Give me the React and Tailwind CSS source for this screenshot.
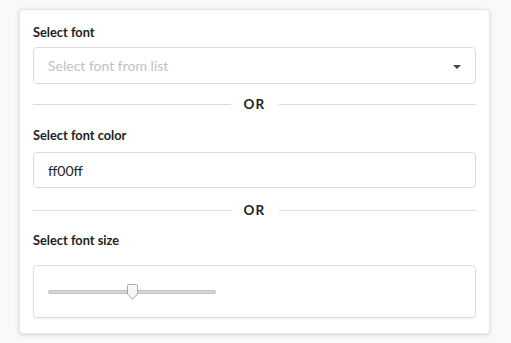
import { useState } from "react";

const Divider = () => (
  <div className="flex items-center h-4">
    <div className="flex-1 h-px bg-[#dcdcdc]" />
    <span className="px-[13px] text-[13.5px] font-bold tracking-[1.2px] text-[#222]">OR</span>
    <div className="flex-1 h-px bg-[#dcdcdc]" />
  </div>
);

const App = () => {
  const [color, setColor] = useState("ff00ff");
  const [size, setSize] = useState(50);

  return (
    <div className="min-h-[343px] bg-[#f9f9f9] pt-[9px] pl-[19px]" style={{ fontFamily: "Lato, 'Open Sans', sans-serif" }}>
      <div className="w-[471px] bg-white rounded-[4px] border border-[#e6e6e6] shadow-[0_1px_4px_rgba(0,0,0,0.15)] px-[13px] pt-[14px] pb-[15px]">
        <label className="block h-4 leading-4 text-[12.8px] font-bold text-[#222] mb-[7px]">Select font</label>
        <div className="relative h-[37px] border border-[#dcdcdc] rounded-[4px] flex items-center pl-[14px]">
          <span className="text-[14px] text-[#c2c2c2]">Select font from list</span>
          <span className="absolute right-[14px] top-[17px] w-0 h-0 border-l-[4px] border-r-[4px] border-t-[4px] border-l-transparent border-r-transparent border-t-[#444]" />
        </div>
        <div className="mt-[12px]">
          <Divider />
        </div>
        <label className="block mt-[15px] h-4 leading-4 text-[12.8px] font-bold text-[#222] mb-[9px]">Select font color</label>
        <input
          value={color}
          onChange={(e) => setColor(e.target.value)}
          className="block w-full h-[36px] border border-[#dcdcdc] rounded-[4px] pl-[14px] text-[14px] text-[#222] outline-none"
        />
        <div className="mt-[14px]">
          <Divider />
        </div>
        <label className="block mt-[14px] h-4 leading-4 text-[12.8px] font-bold text-[#222] mb-[17px]">Select font size</label>
        <div className="h-[53px] border border-[#dcdcdc] rounded-[4px] shadow-[0_1px_2px_rgba(0,0,0,0.06)] flex items-center pl-[14px]">
          <div className="relative w-[168px] h-4">
            <div className="absolute left-0 right-0 top-[6px] h-[4px] rounded-full bg-[#d4d4d4] border border-[#c4c4c4]" />
            <div
              className="absolute top-0 w-[11px] h-[16px]"
              style={{ left: `${(size / 100) * 168 - 5}px` }}
            >
              <svg width="11" height="16" viewBox="0 0 11 16">
                <path d="M1.5 0.5 H9.5 Q10.5 0.5 10.5 1.5 V10 L5.5 15.3 L0.5 10 V1.5 Q0.5 0.5 1.5 0.5 Z" fill="#f7f7f7" stroke="#a8a8a8" strokeWidth="1" />
              </svg>
            </div>
            <input
              type="range"
              min="0"
              max="100"
              value={size}
              onChange={(e) => setSize(Number(e.target.value))}
              className="absolute inset-0 w-full opacity-0 cursor-pointer"
            />
          </div>
        </div>
      </div>
    </div>
  );
};

export default App;
